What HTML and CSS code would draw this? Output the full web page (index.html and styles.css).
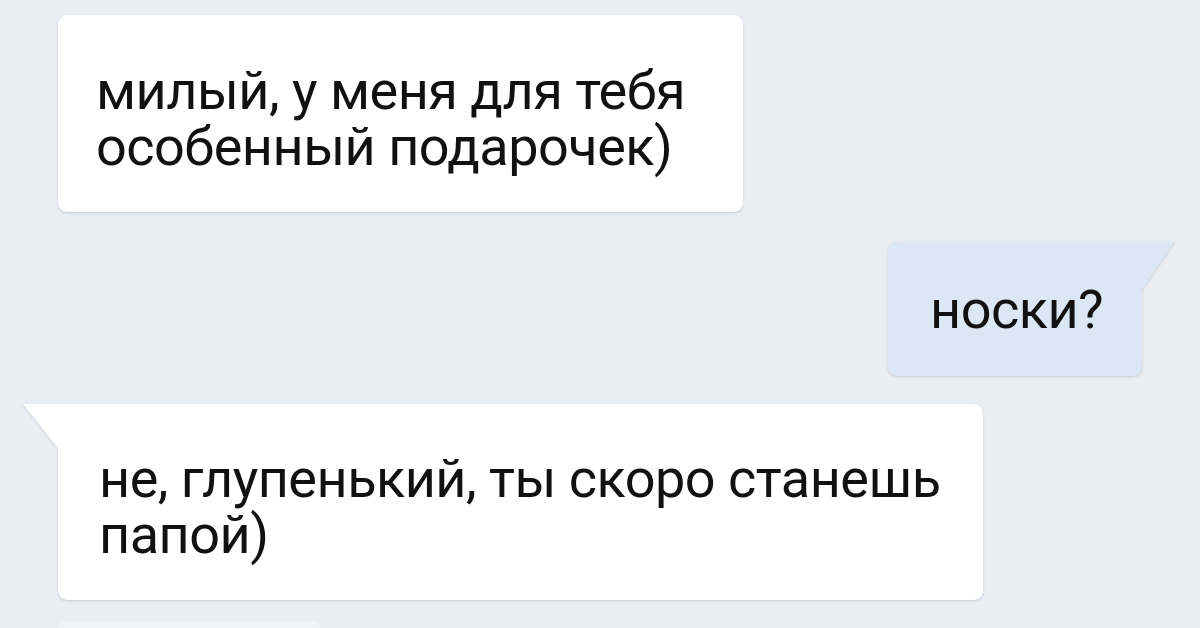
FILE: index.html
```html
<!DOCTYPE html>
<html lang="ru">
<head>
<meta charset="utf-8">
<title>Диалог</title>
<link rel="stylesheet" href="styles.css">
</head>
<body>
<div class="chat">
  <div class="msg msg-in msg-first">
    <p class="text">милый, у меня для тебя<br>особенный подарочек)</p>
  </div>
  <div class="msg msg-out">
    <p class="text">носки?</p>
  </div>
  <div class="msg msg-in msg-tail">
    <p class="text">не, глупенький, ты скоро станешь<br>папой)</p>
  </div>
  <div class="msg msg-in msg-peek"></div>
</div>
</body>
</html>
```
FILE: styles.css
```css
html, body {
  margin: 0;
  padding: 0;
}
body {
  width: 1200px;
  height: 628px;
  overflow: hidden;
  background: #eaedf2;
  font-family: Roboto, "Noto Sans", sans-serif;
  color: #111111;
}
.chat {
  display: flex;
  flex-direction: column;
  padding-top: 15px;
}
.msg {
  position: relative;
  display: flex;
  align-items: center;
  box-sizing: border-box;
  border-radius: 9px;
  background: #ffffff;
  filter: drop-shadow(0 1px 1px rgba(70, 85, 105, 0.22));
}
.text {
  margin: 0;
  font-size: 54px;
  line-height: 56px;
  letter-spacing: -0.5px;
}
.msg-in {
  align-self: flex-start;
  margin-left: 58px;
}
.msg-first {
  width: 685px;
  height: 197px;
  padding-left: 38px;
  padding-top: 10px;
}
.msg-out {
  align-self: flex-end;
  margin-right: 58px;
  margin-top: 29px;
  width: 254px;
  height: 135px;
  padding-left: 42px;
  padding-top: 2px;
  background: #dce7f5;
  border-top-right-radius: 0;
}
.msg-out::after {
  content: "";
  position: absolute;
  top: 0;
  right: -33px;
  width: 34px;
  height: 50px;
  background: #dce7f5;
  clip-path: polygon(0 0, 100% 0, 0 100%);
}
.msg-tail {
  margin-top: 28px;
  width: 925px;
  height: 196px;
  padding-left: 41px;
  padding-top: 10px;
  border-top-left-radius: 0;
}
.msg-tail::before {
  content: "";
  position: absolute;
  top: 0;
  left: -35px;
  width: 36px;
  height: 46px;
  background: #ffffff;
  clip-path: polygon(0 0, 100% 0, 100% 100%);
}
.msg-peek {
  margin-top: 21px;
  width: 262px;
  height: 7px;
  border-radius: 9px 9px 0 0;
  background: #f1f3f6;
  filter: none;
}
```
